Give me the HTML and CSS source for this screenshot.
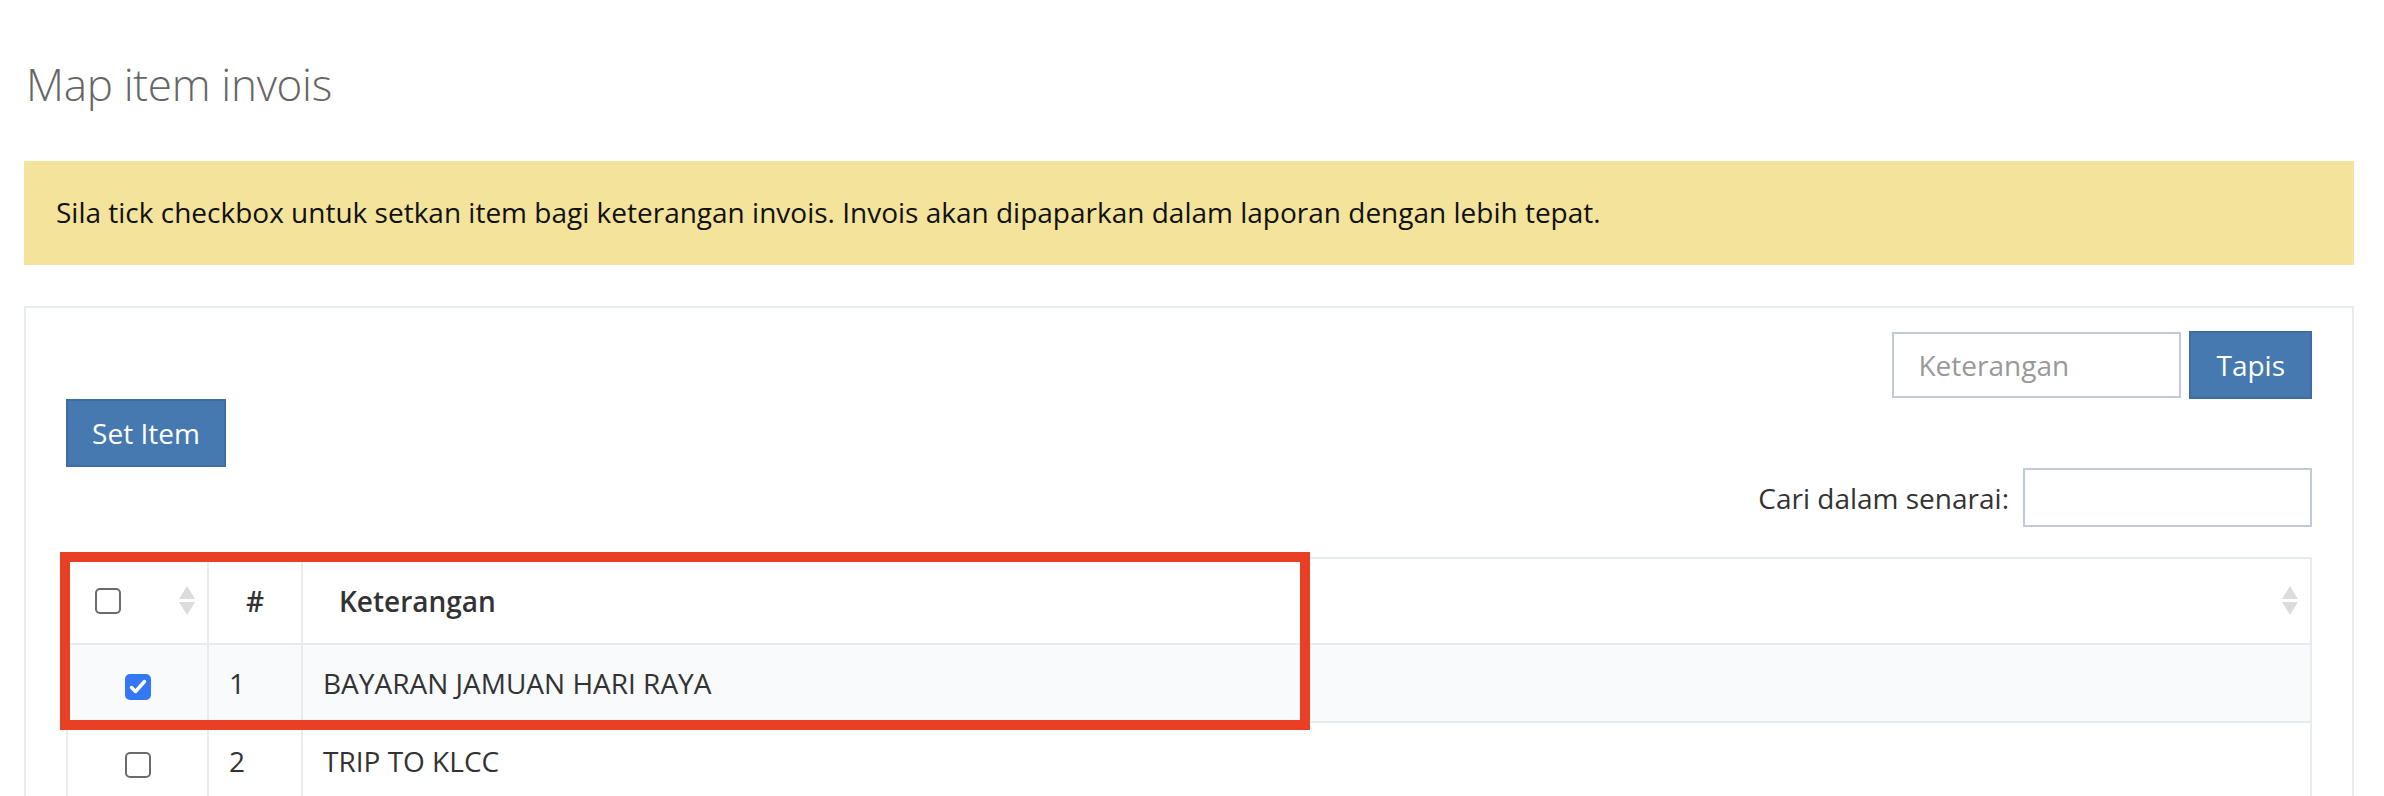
FILE: index.html
```html
<!DOCTYPE html>
<html lang="ms">
<head>
  <meta charset="UTF-8" />
  <meta name="viewport" content="width=device-width, initial-scale=1.0"/>
  <title>Map item invois</title>
  <link rel="stylesheet" href="styles.css">
</head>
<body>
  <div class="page">
    <h1 class="page-title">Map item invois</h1>

    <div class="note">
      Sila tick checkbox untuk setkan item bagi keterangan invois. Invois akan dipaparkan dalam laporan dengan lebih tepat.
    </div>

    <div class="panel">
      <div class="filter-bar">
        <input class="text-input filter-input" type="text" placeholder="Keterangan">
        <button class="btn">Tapis</button>
      </div>

      <div class="actions">
        <button class="btn btn-set">Set Item</button>
      </div>

      <div class="search-bar">
        <label class="search-label" for="search">Cari dalam senarai:</label>
        <input class="text-input search-input" id="search" type="text">
      </div>

      <div class="table-wrap">
        <table class="item-table">
          <thead>
            <tr>
              <th class="col-check">
                <div class="th-inner">
                  <span class="box"></span>
                  <svg class="sort-icon" width="18" height="30" viewBox="0 0 18 30"><polygon points="9,0 17,13 1,13" fill="#dcdcdc"/><polygon points="1,16 17,16 9,29" fill="#dcdcdc"/></svg>
                </div>
              </th>
              <th class="col-num">#</th>
              <th class="col-desc">
                <div class="th-inner">
                  <span>Keterangan</span>
                  <svg class="sort-icon" width="18" height="30" viewBox="0 0 18 30"><polygon points="9,0 17,13 1,13" fill="#dcdcdc"/><polygon points="1,16 17,16 9,29" fill="#dcdcdc"/></svg>
                </div>
              </th>
            </tr>
          </thead>
          <tbody>
            <tr class="odd">
              <td class="cell-check">
                <span class="box checked">
                  <svg width="18" height="16" viewBox="0 0 18 16"><path d="M2.5 8.5 L6.5 12.5 L15.5 2.5" fill="none" stroke="#fff" stroke-width="3.4" stroke-linecap="round" stroke-linejoin="round"/></svg>
                </span>
              </td>
              <td>1</td>
              <td>BAYARAN JAMUAN HARI RAYA</td>
            </tr>
            <tr>
              <td class="cell-check"><span class="box"></span></td>
              <td>2</td>
              <td>TRIP TO KLCC</td>
            </tr>
          </tbody>
        </table>
        <div class="highlight"></div>
      </div>
    </div>
  </div>
</body>
</html>
```

FILE: styles.css
```css
html, body {
  margin: 0;
  padding: 0;
  background: #fff;
  font-family: "Open Sans", "Liberation Sans", sans-serif;
  font-size: 28px;
  color: #333;
  overflow: hidden;
}

.page {
  padding: 0 30px 0 24px;
}

.page-title {
  margin: 53px 0 46px 2px;
  font-size: 44px;
  font-weight: 300;
  line-height: 62px;
  color: #666;
  letter-spacing: -0.3px;
}

.note {
  background: #f4e49b;
  color: #111;
  padding: 31px 32px 33px;
  line-height: 40px;
}

.panel {
  margin-top: 41px;
  border: 2px solid #e7ecf1;
  padding: 23px 40px 200px;
}

.filter-bar {
  display: flex;
  justify-content: flex-end;
  align-items: center;
  gap: 8px;
}

.text-input {
  box-sizing: border-box;
  border: 2px solid #c2cad8;
  background: #fff;
  font-family: inherit;
  font-size: 28px;
  color: #333;
  padding: 0 24px;
  outline: none;
}

.text-input::placeholder {
  color: #999;
}

.filter-input {
  width: 289px;
  height: 66px;
}

.btn {
  box-sizing: border-box;
  height: 68px;
  padding: 0 25px;
  background: #4679b0;
  border: 2px solid #3f6da0;
  color: #fff;
  font-family: inherit;
  font-size: 28px;
  white-space: nowrap;
  cursor: pointer;
}

.actions {
  display: flex;
}

.btn-set {
  width: 160px;
  padding: 0;
}

.search-bar {
  display: flex;
  justify-content: flex-end;
  align-items: center;
  gap: 14px;
  margin-top: 1px;
}

.search-label {
  color: #333;
}

.search-input {
  width: 289px;
  height: 59px;
}

.table-wrap {
  position: relative;
  margin-top: 30px;
}

.item-table {
  width: 100%;
  border-collapse: collapse;
  border: 2px solid #e7ecf1;
}

.item-table th,
.item-table td {
  border: 2px solid #e7ecf1;
  text-align: left;
  padding: 0 20px;
}

.item-table th {
  height: 84px;
  font-weight: 600;
  color: #333;
}

.item-table td {
  height: 76px;
  color: #333;
}

.item-table tr.odd td {
  background: #f9fafc;
}

.th-inner {
  display: flex;
  align-items: center;
  justify-content: space-between;
}

.col-check {
  width: 141px;
  box-sizing: border-box;
}

.item-table th.col-check {
  padding: 0 11px 0 27px;
}

.item-table th.col-num {
  width: 92px;
  text-align: center;
  padding: 0;
}

.item-table th.col-desc {
  padding: 0 11px 0 36px;
}

.sort-icon {
  display: block;
}

.cell-check {
  text-align: center !important;
}

.box {
  display: inline-flex;
  align-items: center;
  justify-content: center;
  box-sizing: border-box;
  width: 26px;
  height: 26px;
  border: 2px solid #6b6b6b;
  border-radius: 5px;
  background: #fff;
  vertical-align: middle;
}

.box.checked {
  background: #3478f6;
  border-color: #3478f6;
}

.highlight {
  position: absolute;
  left: -6px;
  top: -5px;
  width: 1250px;
  height: 178px;
  box-sizing: border-box;
  border: 10px solid #e94025;
  pointer-events: none;
}
```
